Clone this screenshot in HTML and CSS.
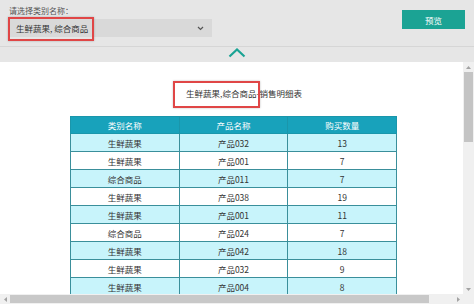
FILE: index.html
```html
<!DOCTYPE html>
<html lang="zh">
<head>
<meta charset="utf-8">
<link rel="stylesheet" href="styles.css">
</head>
<body>
<div class="page">
  <div class="filter">
    <div class="field">
      <div class="label">请选择类别名称：</div>
      <div class="select">
        <span class="value">生鲜蔬果, 综合商品<span class="mark mark-select"></span></span>
        <svg class="caret" width="7" height="5" viewBox="0 0 7 5"><polyline points="1,1 3.5,3.5 6,1" fill="none" stroke="#555" stroke-width="1.2"/></svg>
      </div>
    </div>
    <button class="btn">预览</button>
  </div>
  <div class="toggle">
    <svg width="18" height="10" viewBox="0 0 18 10"><polyline points="1.5,8.5 9,1.5 16.5,8.5" fill="none" stroke="#1aa394" stroke-width="2.2"/></svg>
  </div>
  <div class="viewer">
    <div class="viewport">
      <div class="report">
        <div class="title"><span class="hl">生鲜蔬果,综合商品<span class="mark mark-title"></span></span>-销售明细表</div>
        <table class="grid">
          <thead>
            <tr><th>类别名称</th><th>产品名称</th><th>购买数量</th></tr>
          </thead>
          <tbody>
            <tr><td>生鲜蔬果</td><td>产品032</td><td>13</td></tr>
            <tr><td>生鲜蔬果</td><td>产品001</td><td>7</td></tr>
            <tr><td>综合商品</td><td>产品011</td><td>7</td></tr>
            <tr><td>生鲜蔬果</td><td>产品038</td><td>19</td></tr>
            <tr><td>生鲜蔬果</td><td>产品001</td><td>11</td></tr>
            <tr><td>综合商品</td><td>产品024</td><td>7</td></tr>
            <tr><td>生鲜蔬果</td><td>产品042</td><td>18</td></tr>
            <tr><td>生鲜蔬果</td><td>产品032</td><td>9</td></tr>
            <tr><td>生鲜蔬果</td><td>产品004</td><td>8</td></tr>
          </tbody>
        </table>
      </div>
    </div>
    <div class="vbar">
      <div class="sbtn"><svg width="5" height="3" viewBox="0 0 5 3"><polygon points="0,3 2.5,0 5,3" fill="#a3a3a3"/></svg></div>
      <div class="vtrack"><div class="vthumb"></div></div>
      <div class="sbtn"><svg width="5" height="3" viewBox="0 0 5 3"><polygon points="0,0 2.5,3 5,0" fill="#a3a3a3"/></svg></div>
    </div>
    <div class="hbar">
      <div class="sbtn"><svg width="3" height="5" viewBox="0 0 3 5"><polygon points="3,0 0,2.5 3,5" fill="#a3a3a3"/></svg></div>
      <div class="htrack"><div class="hthumb"></div></div>
      <div class="sbtn"><svg width="3" height="5" viewBox="0 0 3 5"><polygon points="0,0 3,2.5 0,5" fill="#a3a3a3"/></svg></div>
    </div>
    <div class="corner"></div>
  </div>
</div>
</body>
</html>
```
FILE: styles.css
```css
html, body {
  margin: 0;
  padding: 0;
}
body {
  width: 474px;
  height: 304px;
  overflow: hidden;
  font-family: "Noto Sans CJK SC", "Noto Sans", sans-serif;
  color: #333;
  background: #fff;
}
.page {
  display: flex;
  flex-direction: column;
  height: 304px;
}
.filter {
  display: flex;
  justify-content: space-between;
  align-items: flex-start;
  height: 47px;
  box-sizing: border-box;
  padding: 6px 9px 0 9px;
  background: #e6e6e6;
  border-bottom: 1px solid #d6d6d6;
}
.label {
  font-size: 8px;
  line-height: 10px;
  color: #555;
  margin-bottom: 3px;
}
.select {
  width: 203px;
  height: 18px;
  box-sizing: border-box;
  background: #d9d9d9;
  display: flex;
  align-items: center;
  justify-content: space-between;
  padding: 0 8px 0 7px;
  font-size: 8.5px;
  color: #333;
}
.value {
  position: relative;
}
.mark {
  position: absolute;
  border: 2px solid #e04646;
  box-shadow: 0 0 2px rgba(0,0,0,0.25);
  pointer-events: none;
}
.mark-select {
  left: -8px;
  right: -6px;
  top: -5px;
  bottom: -7px;
}
.btn {
  margin-top: 4px;
  width: 63px;
  height: 19px;
  border: 0;
  padding: 0;
  background: #1ba394;
  color: #fff;
  font-family: inherit;
  font-size: 8.5px;
}
.toggle {
  height: 15px;
  background: #e6e6e6;
  display: flex;
  justify-content: center;
  align-items: center;
}
.toggle svg {
  margin-top: -3px;
}
.viewer {
  flex: 1;
  min-height: 0;
  display: grid;
  grid-template-columns: 1fr 11px;
  grid-template-rows: 1fr 10px;
}
.viewport {
  overflow: hidden;
  background: #fff;
}
.vbar {
  background: #f0f0f0;
  display: flex;
  flex-direction: column;
}
.hbar {
  background: #f0f0f0;
  display: flex;
}
.corner {
  background: #f0f0f0;
}
.sbtn {
  flex: 0 0 10px;
  display: flex;
  align-items: center;
  justify-content: center;
}
.vtrack {
  flex: 1;
  padding: 0 1px;
}
.vthumb {
  height: 70px;
  background: #c4c4c4;
}
.htrack {
  flex: 1;
  padding: 1px 0;
}
.hthumb {
  width: 419px;
  height: 100%;
  background: #c8c8c8;
}
.report {
  width: 492px;
  padding-top: 24px;
  box-sizing: border-box;
}
.title {
  text-align: center;
  font-size: 8.5px;
  line-height: 14px;
  color: #333;
  height: 14px;
  margin-bottom: 16px;
  padding-right: 4px;
}
.hl {
  position: relative;
}
.mark-title {
  left: -13px;
  right: -4px;
  top: -6px;
  bottom: -9px;
}
.grid {
  margin-left: 70px;
  width: 327px;
  border-collapse: collapse;
  table-layout: fixed;
  font-size: 8.5px;
}
.grid th,
.grid td {
  border: 1px solid #3a8f9b;
  text-align: center;
  padding: 0;
  height: 17px;
  line-height: 12px;
  font-weight: normal;
}
.grid th {
  background: #18a2bb;
  color: #fff;
  height: 16px;
  border-color: #1a96ab;
}
.grid tbody tr:nth-child(odd) td {
  background: #c8f4fb;
}
.grid tbody tr:nth-child(even) td {
  background: #fff;
}
.grid td {
  color: #333;
}
```
